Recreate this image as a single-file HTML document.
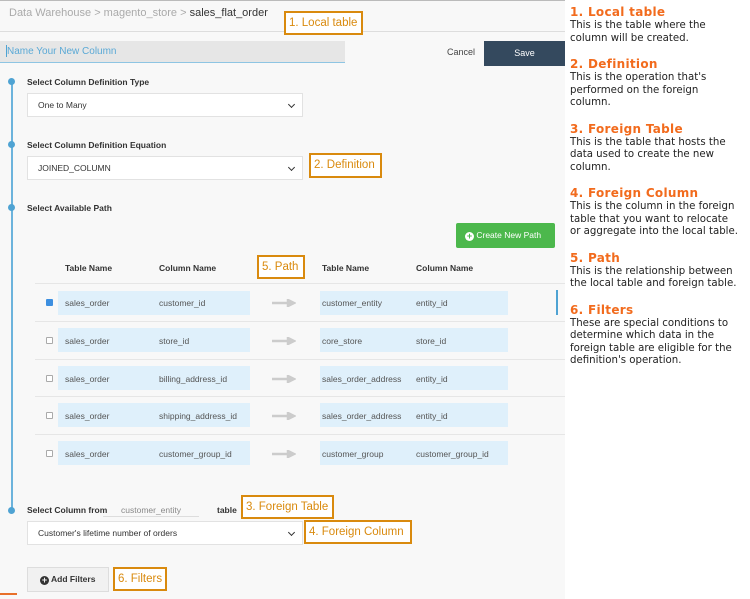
<!DOCTYPE html>
<html><head><style>
*{margin:0;padding:0;box-sizing:border-box}
body{width:750px;height:599px;position:relative;overflow:hidden;background:#fff;font-family:"Liberation Sans",sans-serif}
.a{position:absolute;white-space:nowrap}
#left{left:0;top:0;width:565px;height:599px;background:#f8f8f8;border-top:1px solid #bbb}
.lbl{font-size:8.5px;font-weight:bold;color:#333}
.sel{background:#fff;border:1px solid #e2e2e2;font-size:8.5px;color:#333;padding-left:10px;line-height:22px}
.sel:after{content:"";position:absolute;right:8px;top:8px;width:4px;height:4px;border-right:1.5px solid #333;border-bottom:1.5px solid #333;transform:rotate(45deg)}
.box{border:2.5px solid #d98a0e;background:#fff;color:#d98a0e;font-size:11.5px;padding-left:3px;line-height:20px;overflow:hidden}
.dot{width:7px;height:7px;border-radius:50%;background:#4fa3d3;left:8px}
.cell{background:#dff0fb}
.t{font-size:8.5px;color:#555}
.h{font-size:8.5px;font-weight:bold;color:#333}
.sep{left:35px;width:530px;height:1px;background:#e6e6e6}
.cb{width:7px;height:7px;border:1px solid #aaa;border-radius:1px;background:#fff;left:46px}
.arr{left:272px;width:24px;height:8px}
#right{left:570px;top:0;width:178px;font-family:"DejaVu Sans",sans-serif;white-space:normal}
#right h3{color:#f26b1d;font-size:12px;font-weight:bold;line-height:15px;letter-spacing:.3px}
#right p{font-size:10.2px;color:#222;line-height:12.5px;margin-bottom:12px}
</style></head><body>
<div class="a" id="left">
<div class="a" style="left:0;top:30px;width:565px;height:1px;background:#ddd"></div>
<div class="a" style="left:9px;top:6px;font-size:11px;color:#aaa">Data Warehouse &gt; magento_store &gt; <span style="color:#333">sales_flat_order</span></div>
<div class="a box" style="top:10px;height:24px;width:79px;left:284px">1. Local table</div>
<div class="a" style="left:0;top:40px;width:345px;height:22px;background:#e6e6e6;border-bottom:1px solid #8ec5e3;font-size:10px;color:#5aa9d6;line-height:21px;padding-left:7px">Name Your New Column</div>
<div class="a" style="left:6px;top:44px;width:1px;height:12px;background:#4fa3d3"></div>
<div class="a" style="left:447px;top:46px;font-size:9px;color:#444">Cancel</div>
<div class="a" style="left:484px;top:40px;width:81px;height:25px;background:#34495e;color:#fff;font-size:9px;text-align:center;line-height:25px">Save</div>
<div class="a" style="left:11px;top:80px;width:2px;height:430px;background:#6cb3dc"></div>
<div class="a dot" style="top:77px"></div><div class="a dot" style="top:140px"></div><div class="a dot" style="top:203px"></div><div class="a dot" style="top:506px"></div>
<div class="a lbl" style="left:27px;top:76px">Select Column Definition Type</div>
<div class="a sel" style="left:27px;top:92px;width:276px;height:24px">One to Many</div>
<div class="a lbl" style="left:27px;top:139px">Select Column Definition Equation</div>
<div class="a sel" style="left:27px;top:155px;width:276px;height:24px">JOINED_COLUMN</div>
<div class="a box" style="left:309px;top:152px;width:73px;height:25px">2. Definition</div>
<div class="a lbl" style="left:27px;top:202px">Select Available Path</div>
<div class="a" style="left:456px;top:222px;width:99px;height:25px;background:#4cb84c;border-radius:2px;color:#fff;font-size:8.5px;line-height:25px;padding-left:9px"><span style="display:inline-block;width:9px;height:9px;border-radius:50%;background:#fff;color:#4cb84c;font-size:9px;line-height:9px;text-align:center;font-weight:bold;vertical-align:-1px">+</span> Create New Path</div>
<div class="a h" style="left:65px;top:262px">Table Name</div>
<div class="a h" style="left:159px;top:262px">Column Name</div>
<div class="a box" style="left:257px;top:254px;width:48px;height:24px">5. Path</div>
<div class="a h" style="left:322px;top:262px">Table Name</div>
<div class="a h" style="left:416px;top:262px">Column Name</div>
<div class="a sep" style="top:282px"></div>
<div class="a" style="left:556px;top:289px;width:2px;height:25px;background:#4fa3d3"></div>

<div class="a cell" style="left:58px;top:290px;width:192px;height:24px"></div><div class="a cell" style="left:320px;top:290px;width:188px;height:24px"></div>
<div class="a cb" style="top:298px;background:#3d8fe0;border-color:#3d8fe0"></div>
<div class="a t" style="left:65px;top:297px">sales_order</div><div class="a t" style="left:159px;top:297px">customer_id</div><div class="a t" style="left:322px;top:297px">customer_entity</div><div class="a t" style="left:416px;top:297px">entity_id</div>
<svg class="a arr" style="top:298px" viewBox="0 0 24 8"><path d="M0 4H18M16 1L22 4L16 7Z" stroke="#ccc" stroke-width="2.5" fill="#ccc"/></svg>
<div class="a sep" style="top:320px"></div>

<div class="a cell" style="left:58px;top:327px;width:192px;height:24px"></div><div class="a cell" style="left:320px;top:327px;width:188px;height:24px"></div>
<div class="a cb" style="top:336px"></div>
<div class="a t" style="left:65px;top:335px">sales_order</div><div class="a t" style="left:159px;top:335px">store_id</div><div class="a t" style="left:322px;top:335px">core_store</div><div class="a t" style="left:416px;top:335px">store_id</div>
<svg class="a arr" style="top:336px" viewBox="0 0 24 8"><path d="M0 4H18M16 1L22 4L16 7Z" stroke="#ccc" stroke-width="2.5" fill="#ccc"/></svg>
<div class="a sep" style="top:358px"></div>

<div class="a cell" style="left:58px;top:365px;width:192px;height:24px"></div><div class="a cell" style="left:320px;top:365px;width:188px;height:24px"></div>
<div class="a cb" style="top:374px"></div>
<div class="a t" style="left:65px;top:373px">sales_order</div><div class="a t" style="left:159px;top:373px">billing_address_id</div><div class="a t" style="left:322px;top:373px">sales_order_address</div><div class="a t" style="left:416px;top:373px">entity_id</div>
<svg class="a arr" style="top:374px" viewBox="0 0 24 8"><path d="M0 4H18M16 1L22 4L16 7Z" stroke="#ccc" stroke-width="2.5" fill="#ccc"/></svg>
<div class="a sep" style="top:395px"></div>

<div class="a cell" style="left:58px;top:402px;width:192px;height:24px"></div><div class="a cell" style="left:320px;top:402px;width:188px;height:24px"></div>
<div class="a cb" style="top:411px"></div>
<div class="a t" style="left:65px;top:410px">sales_order</div><div class="a t" style="left:159px;top:410px">shipping_address_id</div><div class="a t" style="left:322px;top:410px">sales_order_address</div><div class="a t" style="left:416px;top:410px">entity_id</div>
<svg class="a arr" style="top:411px" viewBox="0 0 24 8"><path d="M0 4H18M16 1L22 4L16 7Z" stroke="#ccc" stroke-width="2.5" fill="#ccc"/></svg>
<div class="a sep" style="top:433px"></div>

<div class="a cell" style="left:58px;top:440px;width:192px;height:24px"></div><div class="a cell" style="left:320px;top:440px;width:188px;height:24px"></div>
<div class="a cb" style="top:449px"></div>
<div class="a t" style="left:65px;top:448px">sales_order</div><div class="a t" style="left:159px;top:448px">customer_group_id</div><div class="a t" style="left:322px;top:448px">customer_group</div><div class="a t" style="left:416px;top:448px">customer_group_id</div>
<svg class="a arr" style="top:449px" viewBox="0 0 24 8"><path d="M0 4H18M16 1L22 4L16 7Z" stroke="#ccc" stroke-width="2.5" fill="#ccc"/></svg>

<div class="a lbl" style="left:27px;top:504px">Select Column from</div>
<div class="a t" style="left:103px;top:504px;width:96px;text-align:center;border-bottom:1px solid #ddd;padding-bottom:1px;color:#888">customer_entity</div>
<div class="a lbl" style="left:217px;top:504px">table</div>
<div class="a box" style="left:241px;top:494px;width:93px;height:24px">3. Foreign Table</div>
<div class="a sel" style="left:27px;top:520px;width:276px;height:24px">Customer's lifetime number of orders</div>
<div class="a box" style="left:304px;top:519px;width:108px;height:24px">4. Foreign Column</div>
<div class="a" style="left:27px;top:566px;width:82px;height:25px;background:#f1f1f1;border:1px solid #ddd;font-size:8.5px;font-weight:bold;color:#333;line-height:23px;padding-left:12px"><span style="display:inline-block;width:9px;height:9px;border-radius:50%;background:#333;color:#f1f1f1;font-size:9px;line-height:9px;text-align:center;vertical-align:-1px">+</span> Add Filters</div>
<div class="a box" style="left:113px;top:566px;width:54px;height:24px">6. Filters</div>
<div class="a" style="left:0;top:592px;width:17px;height:2px;background:#e8702a"></div>
</div>
<div class="a" id="right">
<h3 style="margin-top:5px">1. Local table</h3><p>This is the table where the<br>column will be created.</p>
<h3>2. Definition</h3><p>This is the operation that's<br>performed on the foreign<br>column.</p>
<h3>3. Foreign Table</h3><p>This is the table that hosts the<br>data used to create the new<br>column.</p>
<h3>4. Foreign Column</h3><p>This is the column in the foreign<br>table that you want to relocate<br>or aggregate into the local table.</p>
<h3>5. Path</h3><p>This is the relationship between<br>the local table and foreign table.</p>
<h3>6. Filters</h3><p>These are special conditions to<br>determine which data in the<br>foreign table are eligible for the<br>definition's operation.</p>
</div>
</body></html>
